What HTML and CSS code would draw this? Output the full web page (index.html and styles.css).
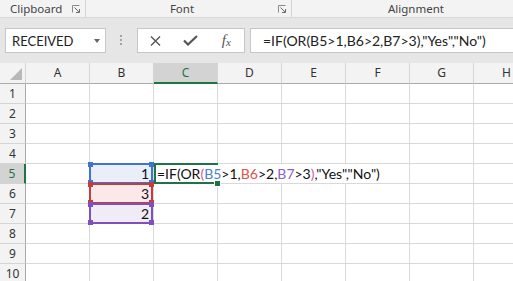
FILE: index.html
```html
<!DOCTYPE html>
<html>
<head>
<meta charset="utf-8">
<link rel="stylesheet" href="styles.css">
</head>
<body>
<div class="ribbon">
  <div class="group g-clip"><span class="glabel">Clipboard</span><svg class="launcher" width="8" height="8" viewBox="0 0 8 8"><path d="M0.5 7.5V0.5H7.5" fill="none" stroke="#8a8a8a"/><path d="M2.5 2.5L7 7M4 7.5H7.5V4" fill="none" stroke="#6a6a6a"/></svg></div>
  <div class="group g-font"><span class="glabel">Font</span><svg class="launcher" width="8" height="8" viewBox="0 0 8 8"><path d="M0.5 7.5V0.5H7.5" fill="none" stroke="#8a8a8a"/><path d="M2.5 2.5L7 7M4 7.5H7.5V4" fill="none" stroke="#6a6a6a"/></svg></div>
  <div class="group g-align"><span class="glabel">Alignment</span></div>
</div>
<div class="fbar">
  <div class="namebox"><span>RECEIVED</span><span class="caret"></span></div>
  <div class="grip"><i></i><i></i><i></i></div>
  <div class="btns">
    <span class="slot"><svg width="11" height="10" viewBox="0 0 11 10"><path d="M1 0.5L10 9.5M10 0.5L1 9.5" stroke="#555" stroke-width="1.4" fill="none"/></svg></span>
    <span class="slot"><svg width="15" height="11" viewBox="0 0 15 11"><path d="M1 5.5L5 9.5L14 1" stroke="#555" stroke-width="2.2" fill="none"/></svg></span>
    <span class="slot fx">f<span class="fxx">x</span></span>
  </div>
  <div class="formula">=IF(OR(B5&gt;1,B6&gt;2,B7&gt;3),"Yes","No")</div>
</div>
<div class="sheet">
  <div class="c ch corner"><svg width="26" height="20" viewBox="0 0 26 20"><path d="M10 17H22V5Z" fill="#b8b8b8"/></svg></div>
  <div class="c ch">A</div><div class="c ch">B</div><div class="c ch sel">C</div><div class="c ch">D</div><div class="c ch">E</div><div class="c ch">F</div><div class="c ch">G</div><div class="c ch last">H</div>

  <div class="c rh">1</div><div class="c"></div><div class="c"></div><div class="c"></div><div class="c"></div><div class="c"></div><div class="c"></div><div class="c"></div><div class="c"></div>
  <div class="c rh">2</div><div class="c"></div><div class="c"></div><div class="c"></div><div class="c"></div><div class="c"></div><div class="c"></div><div class="c"></div><div class="c"></div>
  <div class="c rh">3</div><div class="c"></div><div class="c"></div><div class="c"></div><div class="c"></div><div class="c"></div><div class="c"></div><div class="c"></div><div class="c"></div>
  <div class="c rh">4</div><div class="c"></div><div class="c"></div><div class="c"></div><div class="c"></div><div class="c"></div><div class="c"></div><div class="c"></div><div class="c"></div>
  <div class="c rh rsel">5</div><div class="c"></div><div class="c num f-blue">1</div><div class="c edit">=IF(OR<span class="k-par">(</span><span class="k-blue">B5</span>&gt;1,<span class="k-red">B6</span>&gt;2,<span class="k-pur">B7</span>&gt;3<span class="k-par">)</span>,"Yes","No")</div><div class="c"></div><div class="c"></div>
  <div class="c rh">6</div><div class="c"></div><div class="c num f-red">3</div><div class="c"></div><div class="c"></div><div class="c"></div><div class="c"></div><div class="c"></div><div class="c"></div>
  <div class="c rh">7</div><div class="c"></div><div class="c num f-pur">2</div><div class="c"></div><div class="c"></div><div class="c"></div><div class="c"></div><div class="c"></div><div class="c"></div>
  <div class="c rh">8</div><div class="c"></div><div class="c"></div><div class="c"></div><div class="c"></div><div class="c"></div><div class="c"></div><div class="c"></div><div class="c"></div>
  <div class="c rh">9</div><div class="c"></div><div class="c"></div><div class="c"></div><div class="c"></div><div class="c"></div><div class="c"></div><div class="c"></div><div class="c"></div>
  <div class="c rh">10</div><div class="c"></div><div class="c"></div><div class="c"></div><div class="c"></div><div class="c"></div><div class="c"></div><div class="c"></div><div class="c"></div>

  <div class="rng r-blue"><b class="h tl"></b><b class="h tr"></b><b class="h bl"></b><b class="h br"></b></div>
  <div class="rng r-red"><b class="h tl"></b><b class="h tr"></b><b class="h bl"></b><b class="h br"></b></div>
  <div class="rng r-pur"><b class="h tl"></b><b class="h tr"></b><b class="h bl"></b><b class="h br"></b></div>
  <div class="active"><b class="fill-handle"></b></div>
</div>
</body>
</html>
```
FILE: styles.css
```css
html, body {
  margin: 0;
  padding: 0;
  width: 513px;
  height: 281px;
  overflow: hidden;
  background: #fff;
}
body {
  font-family: "Noto Sans", "Open Sans", sans-serif;
}

/* ribbon group labels */
.ribbon {
  display: flex;
  height: 18px;
  box-sizing: border-box;
  background: #f3f3f3;
  border-bottom: 1px solid #d9d9d9;
}
.group {
  display: flex;
  align-items: center;
  box-sizing: border-box;
  border-right: 1px solid #d5d5d5;
  flex: none;
}
.g-clip { width: 86px; }
.g-font { width: 206px; }
.g-align {
  flex: 1;
  border-right: none;
  padding-left: 27px;
}
.glabel {
  font-size: 11.5px;
  color: #444;
  line-height: 17px;
}
.g-clip .glabel { margin-left: 10px; }
.g-font .glabel, .g-align .glabel { flex: 1; text-align: center; }
.launcher { margin-left: auto; margin-right: 5px; flex: none; }
.g-font .launcher { margin-left: 0; }

/* formula bar */
.fbar {
  display: flex;
  align-items: flex-start;
  height: 45px;
  box-sizing: border-box;
  padding: 10px 0 0 5px;
  background: #e6e6e6;
}
.namebox {
  width: 101px;
  height: 25px;
  box-sizing: border-box;
  background: #fff;
  border: 1px solid #c6c6c6;
  display: flex;
  align-items: center;
  padding: 0 5px 0 6px;
  font-family: Lato, "Liberation Sans", sans-serif;
  font-size: 13px;
  color: #222;
  flex: none;
}
.caret {
  margin-left: auto;
  width: 0;
  height: 0;
  border-left: 3.5px solid transparent;
  border-right: 3.5px solid transparent;
  border-top: 4px solid #666;
}
.grip {
  display: flex;
  flex-direction: column;
  gap: 2px;
  margin-left: 14px;
  padding-top: 7px;
  flex: none;
}
.grip i {
  display: block;
  width: 2px;
  height: 2px;
  background: #a3a3a3;
}
.btns {
  margin-left: 15px;
  width: 108px;
  height: 25px;
  box-sizing: border-box;
  background: #fff;
  border: 1px solid #c6c6c6;
  display: flex;
  align-items: center;
  flex: none;
}
.slot {
  width: 36px;
  display: flex;
  justify-content: center;
  align-items: center;
}
.fx {
  font-family: "Liberation Serif", serif;
  font-style: italic;
  font-size: 15px;
  color: #555;
  line-height: 23px;
}
.fxx { font-size: 11px; position: relative; top: 2px; }
.formula {
  margin-left: 5px;
  flex: 1;
  height: 25px;
  box-sizing: border-box;
  background: #fff;
  border: 1px solid #c6c6c6;
  border-right: none;
  padding-left: 12px;
  font-family: Lato, "Liberation Sans", sans-serif;
  font-size: 14px;
  line-height: 23px;
  color: #222;
  white-space: nowrap;
  overflow: hidden;
}

/* sheet */
.sheet {
  position: relative;
  display: grid;
  grid-template-columns: 26px repeat(7, 64px) 1fr;
  grid-template-rows: 21px repeat(10, 20px);
  background: #fff;
  overflow: hidden;
}
.c {
  box-sizing: border-box;
  border-right: 1px solid #d9d9d9;
  border-bottom: 1px solid #d9d9d9;
  font-family: Lato, "Liberation Sans", sans-serif;
  font-size: 14px;
  line-height: 19px;
  color: #111;
  padding: 0 3px;
  white-space: nowrap;
}
.ch {
  background: #f3f3f3;
  border-bottom: 1px solid #ababab;
  border-right: 1px solid #d4d4d4;
  text-align: center;
  font-family: "Noto Sans", sans-serif;
  font-size: 12px;
  line-height: 20px;
  color: #333;
}
.ch.last {
  text-align: left;
  padding-left: 28px;
  border-right: none;
}
.corner { padding: 0; }
.corner svg { display: block; }
.ch.sel {
  background: #d3d3d3;
  border-bottom: 2px solid #217346;
  color: #217346;
  line-height: 19px;
}
.rh {
  background: #f3f3f3;
  border-right: 1px solid #ababab;
  border-bottom: 1px solid #d4d4d4;
  text-align: center;
  font-family: "Noto Sans", sans-serif;
  font-size: 12px;
  color: #333;
  padding: 0;
}
.rh.rsel {
  background: #d3d3d3;
  border-right: 2px solid #217346;
  color: #217346;
}
.num { text-align: right; padding-right: 4px; }
.f-blue { background: #e9eef8; }
.f-red { background: #fbe9e9; }
.f-pur { background: #f0ecf7; }
.edit {
  grid-column: span 4;
  padding-left: 3px;
  word-spacing: 0;
}
.k-blue { color: #4a7fd6; }
.k-red { color: #d9534f; }
.k-pur { color: #8d5fcb; }
.k-par { color: #d6579a; }

/* range highlight overlays */
.rng {
  position: absolute;
  left: 89px;
  width: 64px;
  height: 21px;
  box-sizing: border-box;
  border: 2px solid;
}
.r-blue { top: 100px; border-color: #3f73cf; color: #3f73cf; }
.r-red { top: 120px; border-color: #c63b3e; color: #c63b3e; }
.r-pur { top: 140px; border-color: #7f4fbe; color: #7f4fbe; }
.h {
  position: absolute;
  width: 5px;
  height: 5px;
  background: currentColor;
}
.tl { left: -3px; top: -3px; }
.tr { right: -3px; top: -3px; }
.bl { left: -3px; bottom: -3px; }
.br { right: -3px; bottom: -3px; }

.active {
  position: absolute;
  left: 154px;
  top: 100px;
  width: 64px;
  height: 21px;
  box-sizing: border-box;
  border: 2px solid #217346;
  border-right: none;
}
.fill-handle {
  position: absolute;
  right: -2px;
  bottom: -4px;
  width: 5px;
  height: 5px;
  background: #217346;
  outline: 1px solid #fff;
}
```
